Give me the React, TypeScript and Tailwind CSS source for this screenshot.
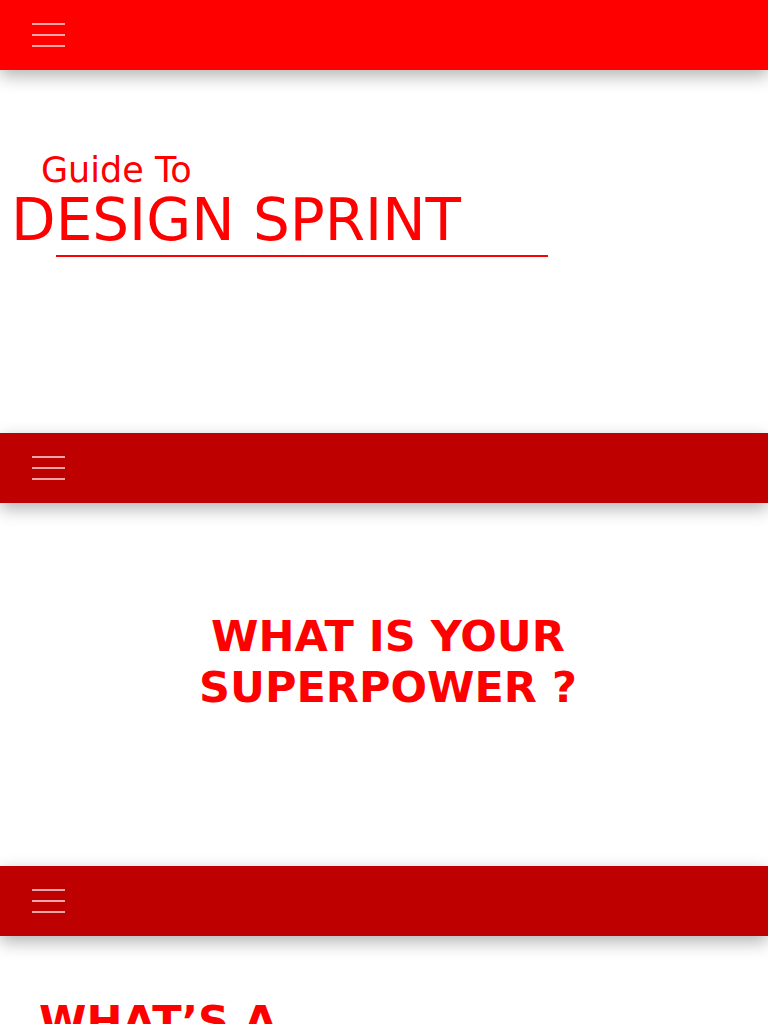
import React from 'react';

const MenuBar: React.FC<{ tone: 'bright' | 'dark' }> = ({ tone }) => (
    <header
        className={`relative z-10 h-[70px] w-full flex items-center px-[32px] shadow-[0_6px_16px_rgba(0,0,0,0.3)] ${
            tone === 'bright' ? 'bg-[#ff0000]' : 'bg-[#bf0000]'
        }`}
    >
        <button className="flex flex-col gap-[9px] w-[33px]">
            <span className="block h-[2px] w-full bg-white/65" />
            <span className="block h-[2px] w-full bg-white/65" />
            <span className="block h-[2px] w-full bg-white/65" />
        </button>
    </header>
);

const App: React.FC = () => {
    return (
        <div className="w-full bg-white text-[#ff0000] font-['DejaVu_Sans',sans-serif] overflow-hidden">
            {/* Hero */}
            <section className="h-[433px] flex flex-col">
                <MenuBar tone="bright" />
                <div className="pt-[80px]">
                    <p className="pl-[41px] text-[35px] leading-[41px]">Guide To</p>
                    <h1 className="pl-[11px] text-[58px] leading-[60px] -mt-[1px]">DESIGN SPRINT</h1>
                    <div className="ml-[56px] mt-[5px] w-[492px] h-[2px] bg-[#ff0000]" />
                </div>
            </section>

            {/* Superpower */}
            <section className="h-[433px] flex flex-col">
                <MenuBar tone="dark" />
                <div className="pt-[108px] pl-[8px] text-center">
                    <h2 className="font-bold text-[43px] leading-[51px]">
                        WHAT IS YOUR
                        <br />
                        SUPERPOWER ?
                    </h2>
                </div>
            </section>

            {/* What's a design sprint */}
            <section className="h-[433px] flex flex-col">
                <MenuBar tone="dark" />
                <div className="pt-[60px] pl-[39px]">
                    <h2 className="font-bold text-[43px] leading-[51px]">
                        WHAT’S A
                        <br />
                        DESIGN SPRINT ?
                    </h2>
                </div>
            </section>
        </div>
    );
};

export default App;
